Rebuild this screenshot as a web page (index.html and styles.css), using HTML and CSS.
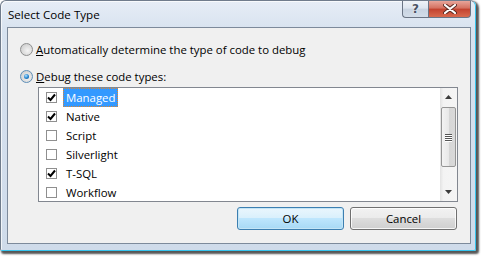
FILE: index.html
```html
<!DOCTYPE html>
<html>
<head>
<meta charset="utf-8">
<link rel="stylesheet" href="styles.css">
</head>
<body>
<div class="screen">
  <div class="window">
    <div class="titlebar">
      <span class="title">Select Code Type</span>
      <div class="caption">
        <div class="cap-btn help">?</div>
        <div class="cap-btn close">
          <svg width="14" height="10" viewBox="0 0 14 10"><path d="M2 1 L12 9 M12 1 L2 9" stroke="#5a2a22" stroke-width="4" stroke-linecap="round"/><path d="M2 1 L12 9 M12 1 L2 9" stroke="#ffffff" stroke-width="2.2" stroke-linecap="round"/></svg>
        </div>
      </div>
    </div>
    <div class="client">
      <div class="option">
        <span class="radio"></span>
        <span class="label"><u>A</u>utomatically determine the type of code to debug</span>
      </div>
      <div class="option second">
        <span class="radio checked"><span class="dot"></span></span>
        <span class="label"><u>D</u>ebug these code types:</span>
      </div>
      <div class="listbox">
        <div class="items">
          <div class="item"><span class="check on"><svg width="9" height="9" viewBox="0 0 9 9"><path d="M1 4.5 L3.5 7 L8 1.5" fill="none" stroke="#000" stroke-width="2"/></svg></span><span class="name selected">Managed</span></div>
          <div class="item"><span class="check on"><svg width="9" height="9" viewBox="0 0 9 9"><path d="M1 4.5 L3.5 7 L8 1.5" fill="none" stroke="#000" stroke-width="2"/></svg></span><span class="name">Native</span></div>
          <div class="item"><span class="check"></span><span class="name">Script</span></div>
          <div class="item"><span class="check"></span><span class="name">Silverlight</span></div>
          <div class="item"><span class="check on"><svg width="9" height="9" viewBox="0 0 9 9"><path d="M1 4.5 L3.5 7 L8 1.5" fill="none" stroke="#000" stroke-width="2"/></svg></span><span class="name">T-SQL</span></div>
          <div class="item"><span class="check"></span><span class="name">Workflow</span></div>
        </div>
        <div class="scrollbar">
          <div class="arrow up"><svg width="7" height="4" viewBox="0 0 7 4"><path d="M0 4 L3.5 0 L7 4 Z" fill="#3c3c3c"/></svg></div>
          <div class="thumb"><span class="grip"></span><span class="grip"></span><span class="grip"></span><span class="grip"></span></div>
          <div class="track"></div>
          <div class="arrow down"><svg width="7" height="4" viewBox="0 0 7 4"><path d="M0 0 L3.5 4 L7 0 Z" fill="#3c3c3c"/></svg></div>
        </div>
      </div>
      <div class="buttons">
        <div class="btn default">OK</div>
        <div class="btn">Cancel</div>
      </div>
    </div>
  </div>
</div>
</body>
</html>
```
FILE: styles.css
```css
html, body {
  margin: 0;
  padding: 0;
  background: #ffffff;
}
.screen {
  width: 482px;
  height: 256px;
  overflow: hidden;
  font-family: "Open Sans", "Noto Sans", sans-serif;
  font-size: 11.4px;
  color: #000;
}
.window {
  width: 476px;
  height: 251px;
  box-sizing: border-box;
  border-radius: 6px 6px 2px 2px;
  border: 1px solid #707c8c;
  border-right-color: #36c4ee;
  border-bottom-color: #36c4ee;
  background: linear-gradient(to bottom, #e6edf6 0px, #d7e2ef 30px, #cfdbea 100%);
  box-shadow: 2px 2px 2px 1px rgba(30,30,30,0.75), inset 1px 1px 0 rgba(255,255,255,0.7);
  padding: 0 4px 0 6px;
  display: flex;
  flex-direction: column;
}
.titlebar {
  height: 26px;
  display: flex;
  justify-content: space-between;
  align-items: flex-start;
}
.title {
  margin-top: 6px;
  margin-left: 1px;
  font-size: 11.6px;
  color: #000;
}
.caption {
  display: flex;
}
.cap-btn {
  height: 17px;
  box-sizing: border-box;
  border: 1px solid #6a7484;
  border-top: none;
  display: flex;
  align-items: center;
  justify-content: center;
}
.help {
  width: 26px;
  border-radius: 0 0 0 4px;
  border-right: none;
  background: linear-gradient(to bottom, #eef2f7 0%, #dde5ef 45%, #c8d3e1 50%, #d3dde9 100%);
  color: #4a5363;
  font-family: "DejaVu Sans", sans-serif;
  font-size: 12px;
  font-weight: bold;
  text-shadow: 0 0 2px #fff;
}
.close {
  width: 43px;
  border-radius: 0 0 4px 0;
  background: linear-gradient(to bottom, #e8a59a 0%, #d4705f 45%, #c2412e 50%, #d86a4e 100%);
}
.client {
  flex: 1;
  margin-bottom: 6px;
  border: 1px solid #7d8a9b;
  background: #f0f0f0;
  padding: 15px 12px 0 12px;
  display: flex;
  flex-direction: column;
}
.option {
  display: flex;
  align-items: center;
  height: 13px;
}
.option.second {
  margin-top: 14px;
}
.radio {
  width: 11px;
  height: 11px;
  border-radius: 50%;
  border: 1px solid #8e8f8f;
  background: radial-gradient(circle at 60% 60%, #f4f4f4 0%, #d8d8d8 60%, #c4c4c4 100%);
  margin-right: 3px;
  display: flex;
  align-items: center;
  justify-content: center;
  flex: none;
}
.radio.checked {
  border-color: #5e8fb8;
}
.dot {
  width: 5px;
  height: 5px;
  border-radius: 50%;
  background: radial-gradient(circle at 40% 35%, #b7e3ff 0%, #2a8ad4 50%, #0f4f8a 100%);
}
.label {
  line-height: 13px;
}
.listbox {
  margin: 4px 0 0 18px;
  height: 115px;
  width: 420px;
  box-sizing: border-box;
  border: 1px solid #828790;
  background: #fff;
  display: flex;
  overflow: hidden;
}
.items {
  flex: 1;
  display: flex;
  flex-direction: column;
}
.item {
  height: 19px;
  flex: none;
  display: flex;
  align-items: center;
  padding-left: 7px;
}
.check {
  width: 11px;
  height: 11px;
  box-sizing: border-box;
  border: 1px solid #8f8f8f;
  background: #fff;
  display: flex;
  align-items: center;
  justify-content: center;
  margin-right: 6px;
}
.name {
  padding: 0 2px;
  line-height: 17px;
  border: 1px solid transparent;
  color: #000;
}
.name.selected {
  background: #3399ff;
  color: #fff;
  border: 1px dotted #e0862e;
}
.scrollbar {
  width: 17px;
  flex: none;
  display: flex;
  flex-direction: column;
  background: linear-gradient(to right, #e3e3e3 0%, #f3f3f3 20%, #f5f5f5 100%);
}
.arrow {
  height: 18px;
  display: flex;
  align-items: center;
  justify-content: center;
}
.thumb {
  height: 60px;
  margin: 1px 1px 0 1px;
  box-sizing: border-box;
  border: 1px solid #959595;
  border-radius: 2px;
  background: linear-gradient(to right, #f3f3f3 0%, #e8e8e8 50%, #d6d6d6 51%, #d9d9d9 100%);
  display: flex;
  flex-direction: column;
  align-items: center;
  justify-content: center;
  gap: 1px;
}
.grip {
  width: 7px;
  height: 1px;
  background: #555;
  box-shadow: 0 1px 0 #fff;
}
.track {
  flex: 1;
}
.buttons {
  display: flex;
  justify-content: flex-end;
  gap: 6px;
  margin-top: 5px;
  margin-right: 1px;
}
.btn {
  width: 107px;
  height: 23px;
  box-sizing: border-box;
  border: 1px solid #707070;
  border-radius: 3px;
  background: linear-gradient(to bottom, #f2f2f2 0%, #ebebeb 48%, #dddddd 50%, #cfcfcf 100%);
  box-shadow: inset 0 0 0 1px rgba(255,255,255,0.8);
  display: flex;
  align-items: center;
  justify-content: center;
}
.btn.default {
  border-color: #3c7fb1;
  background: linear-gradient(to bottom, #eaf6fd 0%, #d9f0fc 48%, #bee6fd 50%, #a7d9f5 100%);
  box-shadow: inset 0 0 0 1px #c4e5f6;
}
```
